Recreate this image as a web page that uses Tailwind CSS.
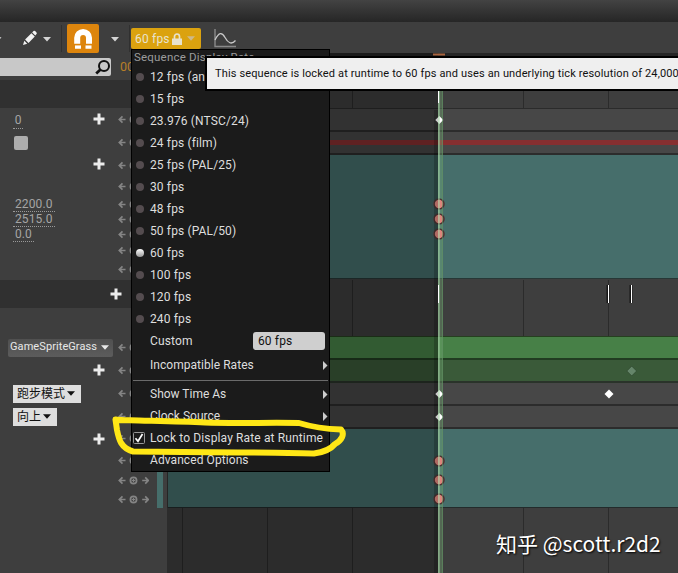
<!DOCTYPE html>
<html lang="en">
<head>
<meta charset="utf-8">
<title>Sequencer</title>
<script src="https://cdn.jsdelivr.net/npm/@tailwindcss/browser@4"></script>
</head>
<body class="bg-[#3e3e3e] font-[Roboto,'Noto_Sans_CJK_SC',sans-serif]">
<svg class="hidden">
  <symbol id="plus" viewBox="0 0 12 12"><path d="M4.500 .5h3v4H11.500v3h-4v4h-3v-4H.5v-3h4z" fill="#ececec"/></symbol>
  <symbol id="keys" viewBox="0 0 32 10"><g fill="none" stroke="#858585" stroke-width="1.700"><path d="M8.500 4.500h-6M5.500 1.300 2.300 4.500l3.200 3.200M25.200 4.500h6M28.200 1.300 31.400 4.500l-3.200 3.200"/><circle cx="16.500" cy="4.500" r="3.100"/><path d="M16.500 2.700v3.600M14.700 4.500h3.600" stroke-width="1.200"/></g></symbol>
  <symbol id="down" viewBox="0 0 8 5"><path d="M0 .3h8L4 4.700z" fill="currentColor"/></symbol>
</svg>
<div class="relative flex h-[573px] w-[678px] flex-col overflow-hidden">
  <div class="h-[22px] shrink-0 bg-linear-to-b from-[#434343] to-[#262626]"></div>
  <header class="flex h-[31px] shrink-0 items-center bg-[#3e3e3e] text-[#d8d8d8]">
    <svg class="h-[31px] w-[131px]" viewBox="0 0 131 31">
      <path d="M0 15.200h1.500L0 17z" fill="#ddd"/>
      <path d="m23 23 1.300-4.200 2.900 2.900zM25.100 17.500l6.300-6.300 3.400 3.400-6.300 6.300zM32.200 10.400l1.300-1.300q.8-.7 1.600 0l1.400 1.400q.8.800 0 1.600l-1.200 1.300z" fill="#f2f2f2"/>
      <path d="M43 15h8l-4 4.500zM111 15h8l-4 4.500z" fill="#d4d4d4"/>
      <path d="M61.500 3v27M129.500 3v27" stroke="#303030"/>
      <rect x="67" y="2" width="32" height="29" rx="2" fill="#dd850d"/>
      <path d="M77.200 22V15.800a5.900 5.900 0 0 1 11.800 0v6.200" fill="none" stroke="#fff" stroke-width="6"/>
      <path d="M75 23.300h6v3.500h-6zM85.500 23.300h6v3.500h-6z" fill="#fff"/>
      <path d="M73 22.500h20" stroke="#dd850d" stroke-width="1.500"/>
    </svg>
    <div class="mt-[2px] flex h-[21px] w-[70px] items-center rounded-[2px] bg-[#dba20f] pl-[4px] text-[12px] tracking-[.2px] text-[#e8e2cd]">
      <span class="w-[36px] whitespace-nowrap">60 fps</span>
      <svg class="h-[14px] w-[12px]" viewBox="0 0 12 14"><path d="M3.500 7V4.500a2.500 2.500 0 0 1 5 0V7" fill="none" stroke="#e8e2cd" stroke-width="1.700"/><path d="M1 6.500h10V13H1z" fill="#e8e2cd"/></svg>
      <svg class="ml-[4px] h-[5px] w-[8px] text-[#cdb98b]"><use href="#down"/></svg>
    </div>
    <svg class="ml-[12px] h-[24px] w-[26px]" viewBox="0 0 26 24" fill="none" stroke="#8a8a8a"><path d="M2 3v17.500h21" stroke-width="1.400"/><path d="M2 14C6 6 9 6 12 11.500s6.500 7.500 10.500 3" stroke="#c9c9c9" stroke-width="1.300"/></svg>
  </header>
  <div class="flex h-[520px] min-h-0">
    <aside class="w-[167px] shrink-0 bg-[#3e3e3e] text-[12px] text-[#a5a5a5]">
      <div class="flex h-[27px] items-start pt-[5px]">
        <div class="flex h-[18px] w-[111px] items-center justify-end rounded-r-[2px] bg-[#c8c8c8]"><svg class="h-[16px] w-[17px]" viewBox="0 0 17 16" fill="none" stroke="#111"><circle cx="10" cy="7" r="5" stroke-width="2"/><path d="m6.500 10.500-4.300 4" stroke-width="2.800"/></svg></div>
        <span class="ml-[9px] text-[12.5px] leading-[18px] text-[#b87f28]">00</span>
      </div>
      <div class="h-[28px] bg-[#303030]"></div>
      <div class="flex h-[172px]">
        <div class="w-[117px]">
          <div class="flex h-[24px] items-center justify-between pr-[12px] pl-[13px]"><span class="mt-[2px] w-[10px] border-b border-dotted border-[#999] text-center leading-[15px]">0</span><svg class="mb-[3px] size-[12px]"><use href="#plus"/></svg></div>
          <div class="flex h-[22px] items-center pl-[14px]"><i class="size-[14px] rounded-[2px] bg-[#adadad]"></i></div>
          <div class="flex h-[23px] items-center justify-end pr-[12px]"><svg class="mb-[3px] size-[12px]"><use href="#plus"/></svg></div>
          <div class="mt-[20px] flex flex-col items-start pl-[13px] text-[12px] leading-[14px] tracking-[.1px]">
            <span class="border-b border-dotted border-[#999] px-[2px]">2200.0</span>
            <span class="border-b border-dotted border-[#999] px-[2px]">2515.0</span>
            <span class="border-b border-dotted border-[#999] px-[2px]">0.0</span>
          </div>
        </div>
        <div class="grid w-[32px] grid-rows-[24px_22px_23px_20px_15px_15px_15px_18px_20px] items-center">
          <svg class="h-[10px] w-[32px]"><use href="#keys"/></svg><svg class="h-[10px] w-[32px]"><use href="#keys"/></svg><svg class="h-[10px] w-[32px]"><use href="#keys"/></svg><svg class="h-[10px] w-[32px]"><use href="#keys"/></svg><svg class="h-[10px] w-[32px]"><use href="#keys"/></svg><svg class="h-[10px] w-[32px]"><use href="#keys"/></svg><svg class="h-[10px] w-[32px]"><use href="#keys"/></svg><svg class="h-[10px] w-[32px]"><use href="#keys"/></svg><svg class="h-[10px] w-[32px]"><use href="#keys"/></svg>
        </div>
      </div>
      <div class="flex h-[28px] items-center bg-[#303030] pl-[110px]"><svg class="size-[12px]"><use href="#plus"/></svg></div>
      <div class="flex h-[265px] pt-[29px]">
        <div class="w-[117px]">
          <div class="flex h-[22px] items-center pl-[8px]"><div class="flex h-[18px] w-[105px] items-center justify-between rounded-[2px] bg-linear-to-b from-[#505050] to-[#5c5c5c] pr-[4px] pl-[2px] text-[11px] leading-[16px] tracking-[.08px] text-[#e8e8e8]"><span class="mb-[2px]">GameSpriteGrass</span><svg class="mb-[1px] h-[5px] w-[8px]"><use href="#down"/></svg></div></div>
          <div class="flex h-[23px] items-center justify-end pr-[12px]"><svg class="mb-[1px] size-[12px]"><use href="#plus"/></svg></div>
          <div class="flex h-[23px] items-center pl-[13px]"><div class="flex h-[18px] w-[68px] items-center gap-[3px] bg-[#dedede] pl-[4px] text-[12px] text-[#111]"><span class="w-[47px] whitespace-nowrap">跑步模式</span><svg class="h-[5px] w-[8px]"><use href="#down"/></svg></div></div>
          <div class="flex h-[23px] items-center pl-[13px]"><div class="flex h-[18px] w-[44px] items-center gap-[2px] bg-[#dedede] pl-[4px] text-[12px] text-[#111]"><span class="w-[24px] whitespace-nowrap">向上</span><svg class="h-[5px] w-[8px]"><use href="#down"/></svg></div></div>
          <div class="flex h-[21px] items-center justify-end pr-[12px]"><svg class="size-[12px]"><use href="#plus"/></svg></div>
        </div>
        <div class="grid w-[32px] grid-rows-[22px_23px_23px_23px_22px_21px_19px_19px] content-start items-center">
          <svg class="h-[10px] w-[32px]"><use href="#keys"/></svg><svg class="h-[10px] w-[32px]"><use href="#keys"/></svg><svg class="h-[10px] w-[32px]"><use href="#keys"/></svg><svg class="h-[10px] w-[32px]"><use href="#keys"/></svg><svg class="h-[10px] w-[32px]"><use href="#keys"/></svg><svg class="h-[10px] w-[32px]"><use href="#keys"/></svg><svg class="h-[10px] w-[32px]"><use href="#keys"/></svg><svg class="h-[10px] w-[32px]"><use href="#keys"/></svg>
        </div>
        <div class="mt-[92px] ml-[8px] h-[79px] w-[6px] bg-[#466e6b]"></div>
      </div>
    </aside>
    <main class="relative w-[511px] bg-[#3e3e3e]">
      <div class="h-[3px] bg-[#262626]"></div>
      <div class="h-[53px] border-b border-[#2b2b2b]"></div>
      <div class="h-[23px] border-b-2 border-[#2c2c2c] bg-[#474747]"></div>
      <div class="flex h-[23px] items-center border-b-2 border-[#2c2c2c] bg-[#474747]"><div class="h-[5px] w-full bg-[#862f30]"></div></div>
      <div class="h-[124px] border-b border-[#273736] bg-[#466e6b]"></div>
      <div class="h-[57px]"></div>
      <div class="h-[24px] border-t border-b-2 border-t-[#25401f] border-b-[#213c21] bg-[#478047]"></div>
      <div class="h-[23px] border-b-2 border-[#2a332a] bg-[#3a5a39]"></div>
      <div class="h-[23px] border-b-2 border-[#2c2c2c] bg-[#474747]"></div>
      <div class="h-[23px] border-b-2 border-[#2c2c2c] bg-[#474747]"></div>
      <div class="h-[79px] border-b border-[#232b2b] bg-[#466e6b]"></div>
      <svg class="absolute top-0 left-0 h-[520px] w-[511px]" viewBox="167 53 511 520">
        <path d="M267.500 280v56M352.500 91v17M352.500 280v56M523.500 91v17M523.500 280v56M608.500 91v17M608.500 280v56M182.500 508v65M267.500 508v65M352.500 508v65M523.500 508v65M608.500 508v65" stroke="#2b2b2b"/>
        <path d="M608 285v18M631 285v18" stroke="#161616" stroke-width="3"/>
        <path d="M608.500 285v18M631.500 285v18" stroke="#fff"/>
        <path d="m609 389.500 4.500 4.500-4.500 4.500-4.500-4.500z" fill="#fff"/>
        <path d="m631.700 366 5 5-5 5-5-5z" fill="#65856a" stroke="#334f33"/>
        <path d="M167 53h271v520H167z" fill="#000" fill-opacity=".29"/>
        <path d="M433 54.500h12" stroke="#a9643f" stroke-width="2"/>
        <path d="M438 91h5v482h-5z" fill="#7cb57c" fill-opacity=".35"/>
        <g fill="#fff"><path d="m439.300 116 4 4-4 4-4-4zM439.300 390l4 4-4 4-4-4zM439.300 413l4 4-4 4-4-4z"/></g>
        <g fill="#dd857c" stroke="#4b3433" stroke-width="1.600"><circle cx="439" cy="204" r="5"/><circle cx="439" cy="219" r="5"/><circle cx="439" cy="234" r="5"/><circle cx="439" cy="461" r="5"/><circle cx="439" cy="480" r="5"/><circle cx="439" cy="499" r="5"/></g>
        <path d="M434 110h4v463h-4z" fill="#000" fill-opacity=".2"/>
        <path d="M438.900 91v482" stroke="#a3cfa4" stroke-opacity=".8" stroke-width="1.400"/>
        <path d="M442.500 91v482" stroke="#5f8f60" stroke-opacity=".6"/>
        <path d="M438.500 91v12M438.500 285v18" stroke="#fff"/>
        <path d="M167.500 53v455" stroke="#252525"/>
      </svg>
    </main>
  </div>

  <div class="absolute top-[49px] left-[131px] h-[423px] w-[199px] border border-black bg-[#1b1b1b] text-[12px] leading-[22px] tracking-[.13px] whitespace-nowrap text-[#dedede]">
    <div class="h-[16px] pl-[2px] text-[11.5px] leading-[14px] tracking-[.2px] text-[#9b9b9b]">Sequence Display Rate</div>
    <div class="[&>div]:flex [&>div]:h-[22px] [&>div]:items-center [&>div]:gap-[6px] [&>div]:pl-[4px] [&_i]:size-[8px] [&_i]:rounded-full [&_i]:bg-[#544c4f]">
      <div><i></i>12 fps (an</div>
      <div><i></i>15 fps</div>
      <div><i></i>23.976 (NTSC/24)</div>
      <div><i></i>24 fps (film)</div>
      <div><i></i>25 fps (PAL/25)</div>
      <div><i></i>30 fps</div>
      <div><i></i>48 fps</div>
      <div><i></i>50 fps (PAL/50)</div>
      <div><b class="size-[8px] rounded-full bg-linear-to-b from-white to-[#999]"></b>60 fps</div>
      <div><i></i>100 fps</div>
      <div><i></i>120 fps</div>
      <div><i></i>240 fps</div>
    </div>
    <div class="flex h-[22px] items-center justify-between pr-[4px] pl-[18px]">Custom<span class="h-[18px] w-[72px] rounded-[3px] bg-[#cfcfcf] pl-[5px] leading-[18px] text-[#111]">60 fps</span></div>
    <div class="mt-[2px] flex h-[22px] items-center justify-between pr-[1px] pl-[18px] tracking-[.04px]">Incompatible Rates<svg class="h-[9px] w-[5px]" viewBox="0 0 5 9"><path d="M0 0v9l4.500-4.500z" fill="#ccc"/></svg></div>
    <div class="mx-[1px] mt-[4px] mb-[2px] h-px bg-[#6b6b6b]"></div>
    <div class="flex h-[22px] items-center justify-between pr-[1px] pl-[18px] tracking-normal">Show Time As<svg class="h-[9px] w-[5px]" viewBox="0 0 5 9"><path d="M0 0v9l4.500-4.500z" fill="#ccc"/></svg></div>
    <div class="flex h-[22px] items-center justify-between pr-[1px] pl-[18px] tracking-normal">Clock Source<svg class="h-[9px] w-[5px]" viewBox="0 0 5 9"><path d="M0 0v9l4.500-4.500z" fill="#ccc"/></svg></div>
    <div class="flex h-[22px] items-center gap-[5px] pl-[1px]"><svg class="size-[12px]" viewBox="0 0 12 12" fill="none"><rect x=".5" y=".5" width="11" height="11" rx="1" stroke="#999"/><path d="m2.500 6.200 2.500 3 4.500-7.200" stroke="#fff" stroke-width="1.700"/></svg>Lock to Display Rate at Runtime</div>
    <div class="h-[22px] pl-[18px] tracking-[.08px]">Advanced Options</div>
  </div>

  <div class="absolute top-[56px] left-[205px] h-[35px] w-[480px] border-2 border-black bg-[#efefef] pl-[8px] text-[11px] leading-[31px] tracking-[.135px] whitespace-nowrap text-[#111]">This sequence is locked at runtime to 60 fps and uses an underlying tick resolution of 24,000</div>

  <svg class="absolute top-[410px] left-[105px] h-[55px] w-[250px]" viewBox="105 410 250 55">
    <path d="M115.500 419.500C118 420 122 420 130 420.300C155 421 180 421.500 205 422.500S270 422.500 299 423C312 427 325 429 341 429.500C345 434 342 440 335 444C330 450 322 452.500 314 453.500C285 453 260 452.500 238 452.500S160 451.500 133 451.500C121 448 119 440 117 430z" fill="none" stroke="#ffe716" stroke-width="6" stroke-linejoin="round"/>
  </svg>
  <div class="absolute top-[528px] left-[496px] text-[21px] leading-[30px] whitespace-nowrap text-white font-['Noto_Sans_CJK_SC',sans-serif] [text-shadow:1px_1px_2px_#000]">知乎 @scott.r2d2</div>
</div>
</body>
</html>
